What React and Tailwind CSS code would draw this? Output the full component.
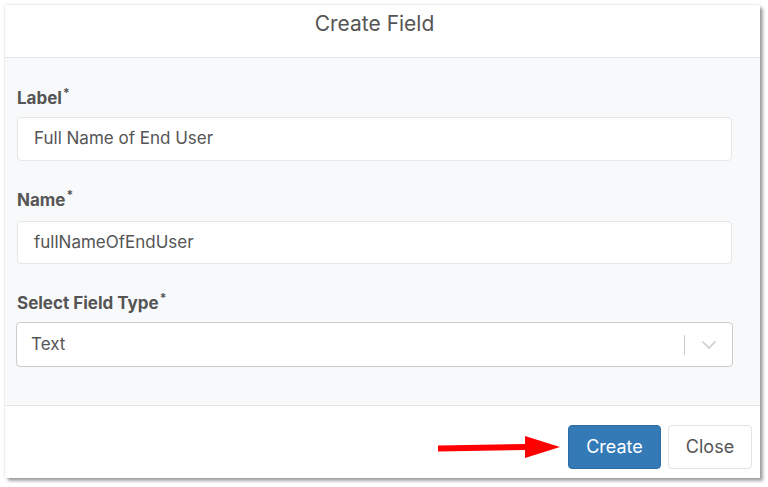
import React from "react";

function Field({ label, children, className = "", gap = "mt-[7px]" }) {
  return (
    <div className={className}>
      <div className="text-[17px] leading-[24px] font-bold text-[#555]">
        {label}
        <span className="text-[12px] leading-none ml-[1px] relative -top-[7px]">*</span>
      </div>
      <div className={gap}>{children}</div>
    </div>
  );
}

function Arrow() {
  return (
    <svg width="122" height="24" viewBox="0 0 122 24" className="mr-[8px]">
      <polygon points="0,10.5 88,9 88,15 0,16.5" fill="#ff0000" />
      <polygon points="87,1 122,12 87,23" fill="#ff0000" />
    </svg>
  );
}

export default function App() {
  return (
    <div
      className="w-[768px] h-[487px] bg-white pt-[5px] pl-[5px]"
      style={{ fontFamily: "Inter, 'Noto Sans', sans-serif" }}
    >
      <div className="w-[755px] h-[473px] flex flex-col bg-white shadow-[0_0_2px_rgba(0,0,0,0.2),3px_3px_3px_rgba(0,0,0,0.35)]">
        {/* HEADER */}
        <div className="h-[53px] shrink-0 border-b border-[#e5e5e5] flex justify-center pt-[5px] pr-[16px]">
          <h2 className="text-[21px] leading-[28px] text-[#555]">Create Field</h2>
        </div>

        {/* BODY */}
        <div className="flex-1 bg-[#f8f9fb] pl-[12px] pr-[28px] pt-[28px]">
          <Field label="Label">
            <div className="h-[44px] rounded-[4px] border border-[#e6e6e6] bg-white flex items-center px-[16px] text-[17px] text-[#555]">
              Full Name of End User
            </div>
          </Field>

          <Field label="Name" className="mt-[27px]" gap="mt-[9px]">
            <div className="h-[43px] rounded-[4px] border border-[#e6e6e6] bg-white flex items-center px-[16px] text-[17px] text-[#555]">
              fullNameOfEndUser
            </div>
          </Field>

          <Field label="Select Field Type" className="mt-[27px]">
            <div className="-ml-[1px] -mr-[1px] h-[45px] rounded-[4px] border border-[#cccccc] bg-white flex items-center pl-[14px] pr-[15px] text-[17px] text-[#555]">
              <span className="flex-1">Text</span>
              <span className="w-px h-[20px] bg-[#cccccc] mr-[16px]" />
              <svg width="16" height="10" viewBox="0 0 16 10" className="mt-[1px]">
                <path d="M1.5 1.5 L8 8 L14.5 1.5" fill="none" stroke="#cccccc" strokeWidth="1.6" />
              </svg>
            </div>
          </Field>
        </div>

        {/* FOOTER */}
        <div className="h-[73px] shrink-0 border-t border-[#e5e5e5] bg-white flex items-center justify-end pr-[8px] pt-[9px]">
          <Arrow />
          <button className="h-[44px] w-[93px] rounded-[4px] bg-[#337ab7] border border-[#2e6da4] text-white text-[18px]">
            Create
          </button>
          <button className="ml-[7px] h-[44px] w-[84px] rounded-[4px] bg-white border border-[#e3e3e3] text-[#555] text-[18px]">
            Close
          </button>
        </div>
      </div>
    </div>
  );
}
